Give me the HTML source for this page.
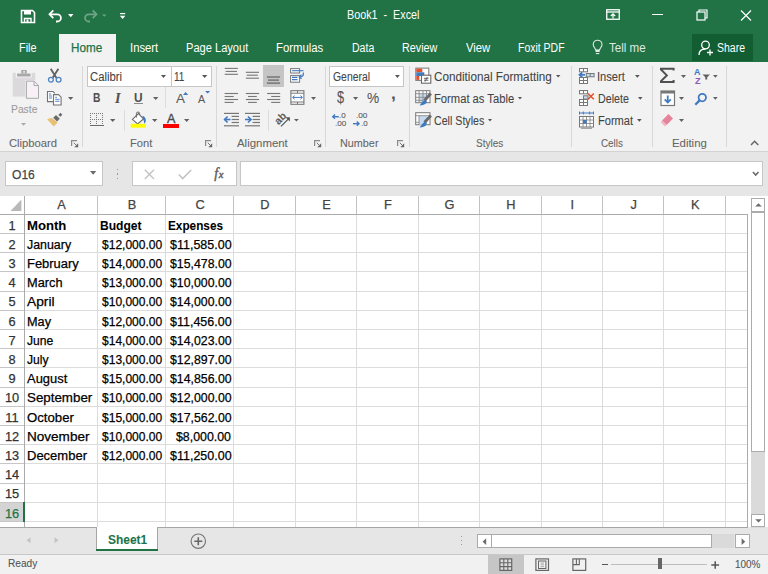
<!DOCTYPE html>
<html><head><meta charset="utf-8">
<style>
*{margin:0;padding:0;box-sizing:border-box}
html,body{width:768px;height:574px;overflow:hidden;background:#fff}
body{position:relative;font-family:"Liberation Sans",sans-serif}
.t.w{-webkit-text-stroke:0}
.rib .t{-webkit-text-stroke:0.08px currentColor}
.a{position:absolute}
.t{position:absolute;white-space:nowrap;line-height:1;transform-origin:0 0;-webkit-text-stroke:0.25px currentColor}
svg{overflow:visible}
</style></head><body>
<div class="a" style="left:0px;top:0px;width:768px;height:62px;background:#217346;"></div>
<svg class="a" style="left:20px;top:9px;" width="16" height="15" viewBox="0 0 16 15"><path d="M1.5 1.5h11l2 2v10h-13z" fill="none" stroke="#fff" stroke-width="1.6"/>
<rect x="4" y="1.5" width="7" height="4" fill="#fff"/><path d="M4.5 13.5v-4h6.5v4" fill="none" stroke="#fff" stroke-width="1.4"/>
<rect x="6.5" y="10.5" width="2" height="3" fill="#fff"/></svg>
<svg class="a" style="left:48px;top:9px;" width="16" height="14" viewBox="0 0 16 14"><path d="M2 5.3h7.3a3.6 3.6 0 0 1 0 7.2H8" fill="none" stroke="#fff" stroke-width="1.8"/>
<path d="M5.3 1.3L1.5 5.3l3.8 3.8" fill="none" stroke="#fff" stroke-width="1.8"/></svg>
<svg class="a" style="left:68px;top:14px;" width="6" height="4" viewBox="0 0 6 4"><path d="M0 0h5.5L2.75 3.2z" fill="#fff"/></svg>
<svg class="a" style="left:82px;top:9px;opacity:.35" width="16" height="14" viewBox="0 0 16 14"><path d="M14 5.3H6.7a3.6 3.6 0 0 0 0 7.2H8" fill="none" stroke="#fff" stroke-width="1.8"/>
<path d="M10.7 1.3l3.8 4l-3.8 3.8" fill="none" stroke="#fff" stroke-width="1.8"/></svg>
<svg class="a" style="left:102px;top:14px;opacity:.35" width="6" height="4" viewBox="0 0 6 4"><path d="M0 0.5h4.5L2.25 2.8z" fill="#fff"/></svg>
<svg class="a" style="left:119px;top:12px;" width="7" height="8" viewBox="0 0 7 8"><rect x="1" y="1" width="5.2" height="1.2" fill="#fff"/><path d="M0.8 3.8h5.6L3.6 7z" fill="#fff"/></svg>
<div class="t w" style="left:346.90px;top:9.42px;font-size:12.06px;color:#fff;transform:scaleX(0.8936);white-space:pre;">Book1  -  Excel</div>
<svg class="a" style="left:606px;top:9px;" width="15" height="12" viewBox="0 0 15 12"><rect x="0.75" y="0.75" width="12.5" height="9.5" fill="none" stroke="#fff" stroke-width="1.3"/>
<path d="M0.75 3h12.5" stroke="#fff" stroke-width="1.3"/><path d="M7 9.5V5M4.8 7l2.2-2.2L9.2 7" fill="none" stroke="#fff" stroke-width="1.2"/></svg>
<div class="a" style="left:652px;top:14.3px;width:11px;height:1.2px;background:#fff;"></div>
<svg class="a" style="left:696px;top:9px;" width="13" height="12" viewBox="0 0 13 12"><rect x="1" y="3" width="8" height="8" fill="none" stroke="#fff" stroke-width="1.2"/>
<path d="M3 3V1h8v8H9" fill="none" stroke="#fff" stroke-width="1.2"/></svg>
<svg class="a" style="left:740px;top:9.5px;" width="12" height="11" viewBox="0 0 12 11"><path d="M1 0.5l10 10M11 0.5l-10 10" stroke="#fff" stroke-width="1.2"/></svg>
<div class="t w" style="left:19.40px;top:42.35px;font-size:12.21px;color:#fff;transform:scaleX(0.8948);">File</div>
<div class="a" style="left:58.5px;top:33.5px;width:57.5px;height:28.5px;background:#f2f2f2;"></div>
<div class="t" style="left:71.25px;top:42.35px;font-size:12.21px;color:#217346;transform:scaleX(0.9578);">Home</div>
<div class="t w" style="left:130.20px;top:42.35px;font-size:12.21px;color:#fff;transform:scaleX(0.9235);">Insert</div>
<div class="t w" style="left:186.00px;top:42.35px;font-size:12.21px;color:#fff;transform:scaleX(0.9086);">Page Layout</div>
<div class="t w" style="left:276.00px;top:42.35px;font-size:12.21px;color:#fff;transform:scaleX(0.9295);">Formulas</div>
<div class="t w" style="left:351.70px;top:42.35px;font-size:12.21px;color:#fff;transform:scaleX(0.8644);">Data</div>
<div class="t w" style="left:402.30px;top:42.35px;font-size:12.21px;color:#fff;transform:scaleX(0.8834);">Review</div>
<div class="t w" style="left:465.70px;top:42.35px;font-size:12.21px;color:#fff;transform:scaleX(0.9249);">View</div>
<div class="t w" style="left:517.70px;top:42.35px;font-size:12.21px;color:#fff;transform:scaleX(0.8587);">Foxit PDF</div>
<svg class="a" style="left:591px;top:39px;" width="13" height="16" viewBox="0 0 13 16"><path d="M4.6 11C4.4 9.2 2.2 8 2.2 5.6A4.4 4.4 0 0 1 11 5.6C11 8 8.8 9.2 8.6 11z" fill="none" stroke="#dfe9e3" stroke-width="1.1"/>
<rect x="4.5" y="10.8" width="4.2" height="2.2" fill="#dfe9e3"/><rect x="4.9" y="14" width="3.4" height="1.1" fill="#dfe9e3"/></svg>
<div class="t w" style="left:609.25px;top:42.35px;font-size:12.21px;color:#dfe9e3;transform:scaleX(0.9488);">Tell me</div>
<div class="a" style="left:692.25px;top:33.5px;width:60.5px;height:27.5px;background:#125d32;"></div>
<svg class="a" style="left:698px;top:40px;" width="17" height="16" viewBox="0 0 17 16"><circle cx="7.5" cy="5" r="3.8" fill="none" stroke="#fff" stroke-width="1.3"/>
<path d="M1 15c0-4 2.5-6 6.5-6" fill="none" stroke="#fff" stroke-width="1.3"/><path d="M12 9.5v6M9 12.5h6" stroke="#fff" stroke-width="1.3"/></svg>
<div class="t w" style="left:717.25px;top:42.35px;font-size:12.21px;color:#fff;transform:scaleX(0.8596);">Share</div>
<div class="rib">
<div class="a" style="left:0px;top:62px;width:768px;height:89px;background:#f2f2f2;"></div>
<div class="a" style="left:0px;top:151px;width:768px;height:1px;background:#d2d2d2;"></div>
<div class="t" style="left:9.20px;top:137.93px;font-size:11.05px;color:#666;transform:scaleX(1.0174);">Clipboard</div>
<div class="t" style="left:130.10px;top:137.93px;font-size:11.05px;color:#666;transform:scaleX(1.0134);">Font</div>
<div class="t" style="left:237.20px;top:137.93px;font-size:11.05px;color:#666;transform:scaleX(1.0341);">Alignment</div>
<div class="t" style="left:339.50px;top:137.93px;font-size:11.05px;color:#666;transform:scaleX(0.9798);">Number</div>
<div class="t" style="left:476.30px;top:137.93px;font-size:11.05px;color:#666;transform:scaleX(0.9043);">Styles</div>
<div class="t" style="left:600.60px;top:137.93px;font-size:11.05px;color:#666;transform:scaleX(0.8918);">Cells</div>
<div class="t" style="left:671.50px;top:137.93px;font-size:11.05px;color:#666;transform:scaleX(1.0302);">Editing</div>
<div class="a" style="left:82px;top:66px;width:1px;height:81px;background:#d8d8d8;"></div>
<div class="a" style="left:216px;top:66px;width:1px;height:81px;background:#d8d8d8;"></div>
<div class="a" style="left:325px;top:66px;width:1px;height:81px;background:#d8d8d8;"></div>
<div class="a" style="left:408.5px;top:66px;width:1px;height:81px;background:#d8d8d8;"></div>
<div class="a" style="left:571.3px;top:66px;width:1px;height:81px;background:#d8d8d8;"></div>
<div class="a" style="left:652.3px;top:66px;width:1px;height:81px;background:#d8d8d8;"></div>
<div class="a" style="left:726px;top:66px;width:1px;height:81px;background:#d8d8d8;"></div>
<svg class="a" style="left:70.5px;top:140px;" width="8" height="8" viewBox="0 0 8 8"><path d="M0.6 6V0.6H6" fill="none" stroke="#8a8a8a" stroke-width="1.2"/><path d="M2.8 2.8L5 5" stroke="#777" stroke-width="1"/><path d="M7.2 3.3V7.2H3.3z" fill="#666"/></svg>
<svg class="a" style="left:204.5px;top:140px;" width="8" height="8" viewBox="0 0 8 8"><path d="M0.6 6V0.6H6" fill="none" stroke="#8a8a8a" stroke-width="1.2"/><path d="M2.8 2.8L5 5" stroke="#777" stroke-width="1"/><path d="M7.2 3.3V7.2H3.3z" fill="#666"/></svg>
<svg class="a" style="left:313.5px;top:140px;" width="8" height="8" viewBox="0 0 8 8"><path d="M0.6 6V0.6H6" fill="none" stroke="#8a8a8a" stroke-width="1.2"/><path d="M2.8 2.8L5 5" stroke="#777" stroke-width="1"/><path d="M7.2 3.3V7.2H3.3z" fill="#666"/></svg>
<svg class="a" style="left:396.5px;top:140px;" width="8" height="8" viewBox="0 0 8 8"><path d="M0.6 6V0.6H6" fill="none" stroke="#8a8a8a" stroke-width="1.2"/><path d="M2.8 2.8L5 5" stroke="#777" stroke-width="1"/><path d="M7.2 3.3V7.2H3.3z" fill="#666"/></svg>
<svg class="a" style="left:12px;top:69px;" width="29" height="31" viewBox="0 0 29 31"><rect x="0.7" y="3.8" width="22.6" height="23.8" fill="#dcd9dc"/>
<rect x="3.8" y="0" width="16" height="8.5" fill="#f2f2f2"/>
<rect x="5.1" y="4.4" width="13.5" height="3.1" fill="#a9a9a9" rx="0.6"/>
<rect x="9.2" y="1" width="5.6" height="3.6" fill="#a9a9a9" rx="0.5"/><rect x="11.2" y="2.2" width="1.8" height="1.4" fill="#f2f2f2"/>
<path d="M14.4 12.1h7.6l4.5 4.5v12.7h-12.1z" fill="#f7f1f7" stroke="#f2f2f2" stroke-width="2.2"/>
<path d="M14.4 12.1h7.6l4.5 4.5v12.7h-12.1z" fill="#f7f1f7" stroke="#a8a8a8" stroke-width="1"/>
<path d="M22 12.1v4.5h4.5" fill="none" stroke="#a8a8a8" stroke-width="1"/></svg>
<div class="t" style="left:11.00px;top:103.85px;font-size:11.19px;color:#9a9a9a;transform:scaleX(0.9225);">Paste</div>
<svg class="a" style="left:21px;top:123px;" width="5" height="2.8" viewBox="0 0 5 2.8"><path d="M0 0H5L2.5 2.8z" fill="#a8a8a8"/></svg>
<svg class="a" style="left:46px;top:67px;" width="17" height="17" viewBox="0 0 17 17"><path d="M4.7 1.8L10.5 11M12.4 1.8L6.6 11" stroke="#606060" stroke-width="1.8" fill="none"/>
<circle cx="4.9" cy="12.7" r="2.4" fill="none" stroke="#4f84c4" stroke-width="1.3"/>
<circle cx="12.6" cy="12.7" r="2.4" fill="none" stroke="#4f84c4" stroke-width="1.3"/></svg>
<svg class="a" style="left:46px;top:90px;" width="17" height="16" viewBox="0 0 17 16"><path d="M7 11.6H1.5V1.5H7l1.8 1.8" fill="#fff" stroke="#737373" stroke-width="1.1"/>
<path d="M3 4h2.2M3 6h3M3 8h3" stroke="#3f79c0" stroke-width="0.9"/>
<path d="M7.5 4.6h5l2.6 2.6v7.8H7.5z" fill="#fff" stroke="#737373" stroke-width="1.1"/>
<path d="M9.2 7.3h1.8M9.2 9.3h4.3M9.2 11.3h4.3" stroke="#3f79c0" stroke-width="0.9"/></svg>
<svg class="a" style="left:67.8px;top:97px;" width="5.3" height="3" viewBox="0 0 5.3 3"><path d="M0 0H5.3L2.65 3z" fill="#606060"/></svg>
<svg class="a" style="left:46px;top:112px;" width="17" height="16" viewBox="0 0 17 16"><path d="M1.1 7.3L5.5 5.8L11.6 10.4L7.8 14.4z" fill="#e9bf74"/>
<path d="M8.6 4.4L12.4 8.2" stroke="#6a6a6a" stroke-width="4"/>
<path d="M13.4 1.9L15.3 3.8" stroke="#6a6a6a" stroke-width="3"/></svg>
<div class="a" style="left:86.5px;top:65.5px;width:125px;height:21.5px;background:#fff;border:1px solid #c6c6c6"></div>
<div class="a" style="left:170.5px;top:65.5px;width:1px;height:21.5px;background:#c6c6c6;"></div>
<div class="t" style="left:89.50px;top:71.20px;font-size:12.50px;color:#444;transform:scaleX(0.9033);">Calibri</div>
<svg class="a" style="left:161px;top:75px;" width="5" height="3" viewBox="0 0 5 3"><path d="M0 0H5L2.5 3z" fill="#555"/></svg>
<div class="t" style="left:173.50px;top:71.20px;font-size:12.50px;color:#444;transform:scaleX(0.8015);">11</div>
<svg class="a" style="left:202.3px;top:75px;" width="5.3" height="3" viewBox="0 0 5.3 3"><path d="M0 0H5.3L2.65 3z" fill="#555"/></svg>
<div class="t" style="left:92.80px;top:91.26px;font-size:13.37px;color:#505050;font-weight:bold;-webkit-text-stroke:0.05px currentColor;transform:scaleX(0.7665);">B</div>
<div class="t" style="left:115px;top:91.7px;font-family:'Liberation Serif',serif;font-style:italic;font-weight:bold;font-size:13.6px;color:#505050;transform:scaleX(1.05)">I</div>
<div class="t" style="left:134.30px;top:92.13px;font-size:12.65px;color:#505050;font-weight:bold;-webkit-text-stroke:0.05px currentColor;transform:scaleX(0.9420);">U</div>
<div class="a" style="left:134.3px;top:102.7px;width:8.6px;height:1.1px;background:#8a8a8a;"></div>
<svg class="a" style="left:152.6px;top:97px;" width="5.4" height="3" viewBox="0 0 5.4 3"><path d="M0 0H5.4L2.7 3z" fill="#606060"/></svg>
<div class="a" style="left:165px;top:87px;width:1px;height:21px;background:#dcdcdc;"></div>
<div class="t" style="left:175.90px;top:92.07px;font-size:13.66px;color:#5a5a5a;transform:scaleX(0.9876);">A</div>
<svg class="a" style="left:183px;top:91.5px;" width="6" height="3" viewBox="0 0 6 3"><path d="M0 3h5.2L2.6 0z" fill="#3f79c0"/></svg>
<div class="t" style="left:197.90px;top:94.09px;font-size:10.61px;color:#5a5a5a;transform:scaleX(1.0032);">A</div>
<svg class="a" style="left:204.5px;top:91.2px;" width="6" height="3" viewBox="0 0 6 3"><path d="M0 0h5.2L2.6 2.6z" fill="#3f79c0"/></svg>
<svg class="a" style="left:90px;top:113px;" width="14" height="14" viewBox="0 0 14 14"><rect x="0" y="0" width="1" height="1" fill="#777"/><rect x="0" y="2" width="1" height="1" fill="#777"/><rect x="0" y="4" width="1" height="1" fill="#777"/><rect x="0" y="6" width="1" height="1" fill="#777"/><rect x="0" y="8" width="1" height="1" fill="#777"/><rect x="0" y="10" width="1" height="1" fill="#777"/><rect x="2" y="0" width="1" height="1" fill="#777"/><rect x="2" y="6" width="1" height="1" fill="#777"/><rect x="4" y="0" width="1" height="1" fill="#777"/><rect x="4" y="6" width="1" height="1" fill="#777"/><rect x="6" y="0" width="1" height="1" fill="#777"/><rect x="6" y="2" width="1" height="1" fill="#777"/><rect x="6" y="4" width="1" height="1" fill="#777"/><rect x="6" y="6" width="1" height="1" fill="#777"/><rect x="6" y="8" width="1" height="1" fill="#777"/><rect x="6" y="10" width="1" height="1" fill="#777"/><rect x="8" y="0" width="1" height="1" fill="#777"/><rect x="8" y="6" width="1" height="1" fill="#777"/><rect x="10" y="0" width="1" height="1" fill="#777"/><rect x="10" y="6" width="1" height="1" fill="#777"/><rect x="12" y="0" width="1" height="1" fill="#777"/><rect x="12" y="2" width="1" height="1" fill="#777"/><rect x="12" y="4" width="1" height="1" fill="#777"/><rect x="12" y="6" width="1" height="1" fill="#777"/><rect x="12" y="8" width="1" height="1" fill="#777"/><rect x="12" y="10" width="1" height="1" fill="#777"/><rect x="0" y="12" width="14" height="1" fill="#6a6a6a"/></svg>
<svg class="a" style="left:110px;top:119.2px;" width="5.4" height="3" viewBox="0 0 5.4 3"><path d="M0 0H5.4L2.7 3z" fill="#606060"/></svg>
<div class="a" style="left:123.5px;top:109.5px;width:1px;height:21px;background:#dcdcdc;"></div>
<svg class="a" style="left:130px;top:111px;" width="17" height="17" viewBox="0 0 17 17"><path d="M2.4 8.3L8.5 2.6L13.5 8L7.6 13z" fill="#fff" stroke="#6a6a6a" stroke-width="1.1"/>
<path d="M6.4 6.5V2.6a1.6 1.6 0 0 1 3.2 0V4" fill="none" stroke="#6a6a6a" stroke-width="1"/>
<path d="M12.6 4.7c2 0.5 3.6 2.8 3.2 5.3c-0.3 1.4-1 2.2-1.9 2.8c0.4-1.8 0-3.6-1.3-5.3z" fill="#3f79c0"/>
<rect x="0.7" y="12.8" width="15.3" height="3.9" fill="#ffff00"/></svg>
<svg class="a" style="left:151.6px;top:119.2px;" width="5.4" height="3" viewBox="0 0 5.4 3"><path d="M0 0H5.4L2.7 3z" fill="#606060"/></svg>
<div class="t" style="left:167.00px;top:112.27px;font-size:13.66px;color:#4a4a4a;transform:scaleX(0.9218);-webkit-text-stroke:0.35px #4a4a4a;">A</div>
<div class="a" style="left:163.1px;top:124px;width:15.7px;height:3.8px;background:#ff0000;"></div>
<svg class="a" style="left:184.1px;top:119.2px;" width="5.4" height="3" viewBox="0 0 5.4 3"><path d="M0 0H5.4L2.7 3z" fill="#606060"/></svg>
<svg class="a" style="left:220px;top:62px;" width="80" height="30" viewBox="0 0 80 30"><rect x="4.70" y="5.85" width="13.20" height="1.1" fill="#777"/><rect x="5.60" y="8.85" width="11.40" height="1.1" fill="#777"/><rect x="4.70" y="11.75" width="13.20" height="1.1" fill="#777"/><rect x="25.80" y="9.75" width="13.20" height="1.1" fill="#777"/><rect x="26.70" y="12.65" width="11.20" height="1.1" fill="#777"/><rect x="25.80" y="15.65" width="13.20" height="1.1" fill="#777"/></svg>
<div class="a" style="left:263.1px;top:65.3px;width:20.8px;height:21.6px;background:#c5c5c5;"></div>
<svg class="a" style="left:263px;top:62px;" width="22" height="30" viewBox="0 0 22 30"><rect x="3.90" y="14.35" width="13.20" height="1.3" fill="#6a6a6a"/><rect x="5.00" y="17.45" width="11.00" height="1.3" fill="#6a6a6a"/><rect x="3.90" y="20.45" width="13.20" height="1.3" fill="#6a6a6a"/></svg>
<svg class="a" style="left:289px;top:67px;" width="17" height="17" viewBox="0 0 17 17"><rect x="1.6" y="1.6" width="9" height="4.4" fill="#fff" stroke="#777" stroke-width="1"/>
<path d="M3 3.7H14.5" stroke="#3f79c0" stroke-width="1.1"/>
<rect x="1.6" y="8.6" width="9" height="6.6" fill="#fff" stroke="#777" stroke-width="1"/>
<path d="M3 10.4H8.5M3 12.6H8.5" stroke="#3f79c0" stroke-width="1.1"/>
<path d="M14.3 5.5c0.6 3-1 4.3-3.5 4.4" fill="none" stroke="#3f79c0" stroke-width="1.2"/>
<path d="M12.5 7.8L10.3 9.9L12.6 11.8" fill="none" stroke="#3f79c0" stroke-width="1.2"/></svg>
<svg class="a" style="left:220px;top:88px;" width="64" height="20" viewBox="0 0 64 20"><rect x="4.60" y="4.95" width="13.40" height="1.1" fill="#777"/><rect x="4.60" y="7.95" width="9.10" height="1.1" fill="#777"/><rect x="4.60" y="10.95" width="13.40" height="1.1" fill="#777"/><rect x="4.60" y="13.85" width="9.10" height="1.1" fill="#777"/><rect x="25.80" y="4.95" width="13.30" height="1.1" fill="#777"/><rect x="28.00" y="7.95" width="8.80" height="1.1" fill="#777"/><rect x="25.80" y="10.95" width="13.30" height="1.1" fill="#777"/><rect x="28.00" y="13.85" width="8.80" height="1.1" fill="#777"/><rect x="47.10" y="4.95" width="13.10" height="1.1" fill="#777"/><rect x="51.20" y="7.95" width="9.00" height="1.1" fill="#777"/><rect x="47.10" y="10.95" width="13.10" height="1.1" fill="#777"/><rect x="51.20" y="13.85" width="9.00" height="1.1" fill="#777"/></svg>
<svg class="a" style="left:289.5px;top:90px;" width="15" height="15" viewBox="0 0 15 15"><rect x="0.9" y="0.7" width="13" height="13.6" fill="#fff" stroke="#777" stroke-width="1.1"/>
<path d="M0.9 3.2H13.9M0.9 12H13.9M7.5 0.7V3.2M7.5 12V14.3" stroke="#777" stroke-width="1"/>
<path d="M3 7.4H12" stroke="#3f79c0" stroke-width="1"/>
<path d="M4.6 5.6L2.6 7.4L4.6 9.2M10.4 5.6L12.4 7.4L10.4 9.2" fill="none" stroke="#3f79c0" stroke-width="1"/></svg>
<svg class="a" style="left:311.1px;top:97.1px;" width="5" height="2.9" viewBox="0 0 5 2.9"><path d="M0 0H5L2.5 2.9z" fill="#606060"/></svg>
<svg class="a" style="left:224px;top:112px;" width="16" height="15" viewBox="0 0 16 15"><rect x="0" y="0.80" width="15" height="1.2" fill="#777"/><rect x="0" y="13.20" width="15" height="1.2" fill="#777"/><rect x="7.6" y="3.80" width="7.4" height="1.2" fill="#777"/><rect x="7.6" y="6.90" width="7.4" height="1.2" fill="#777"/><rect x="7.6" y="9.90" width="7.4" height="1.2" fill="#777"/><path d="M0.5 7.5H6.5" stroke="#3f79c0" stroke-width="1.6"/><path d="M3.6 4.5L0.6 7.5L3.6 10.5" fill="none" stroke="#3f79c0" stroke-width="1.6"/></svg>
<svg class="a" style="left:245px;top:112px;" width="16" height="15" viewBox="0 0 16 15"><rect x="0" y="0.80" width="15" height="1.2" fill="#777"/><rect x="0" y="13.20" width="15" height="1.2" fill="#777"/><rect x="7.6" y="3.80" width="7.4" height="1.2" fill="#777"/><rect x="7.6" y="6.90" width="7.4" height="1.2" fill="#777"/><rect x="7.6" y="9.90" width="7.4" height="1.2" fill="#777"/><path d="M0 7.5H6" stroke="#3f79c0" stroke-width="1.6"/><path d="M3 4.5L6 7.5L3 10.5" fill="none" stroke="#3f79c0" stroke-width="1.6"/></svg>
<div class="a" style="left:267.5px;top:109.5px;width:1px;height:21px;background:#dcdcdc;"></div>
<div class="t" style="left:273.5px;top:112.8px;font-size:10.5px;font-weight:bold;color:#5f5f5f;transform:rotate(-45deg);transform-origin:50% 50%">ab</div>
<svg class="a" style="left:274px;top:112px;" width="18" height="16" viewBox="0 0 18 16"><path d="M7 14.3L14.5 6.8" stroke="#555" stroke-width="1.2"/><path d="M11.5 5.2H15.9V9.6z" fill="#555"/></svg>
<svg class="a" style="left:294px;top:119px;" width="4.8" height="2.6" viewBox="0 0 4.8 2.6"><path d="M0 0H4.8L2.4 2.6z" fill="#606060"/></svg>
<div class="a" style="left:329.4px;top:65.5px;width:74.2px;height:21px;background:#fff;border:1px solid #c6c6c6"></div>
<div class="t" style="left:332.90px;top:71.20px;font-size:12.50px;color:#444;transform:scaleX(0.8342);">General</div>
<svg class="a" style="left:394.5px;top:75px;" width="4.8" height="3" viewBox="0 0 4.8 3"><path d="M0 0H4.8L2.4 3z" fill="#555"/></svg>
<div class="t" style="left:336.70px;top:90.04px;font-size:15.57px;color:#555;transform:scaleX(0.8199);">$</div>
<svg class="a" style="left:353px;top:97px;" width="5.2" height="2.9" viewBox="0 0 5.2 2.9"><path d="M0 0H5.2L2.6 2.9z" fill="#606060"/></svg>
<div class="t" style="left:367.10px;top:91.28px;font-size:14.86px;color:#555;transform:scaleX(0.9237);">%</div>
<div class="t" style="left:390.60px;top:85.95px;font-size:16.00px;color:#555;font-weight:bold;-webkit-text-stroke:0.05px currentColor;transform:scaleX(1.0791);">,</div>
<div class="t" style="left:339.40px;top:112.17px;font-size:7.56px;color:#555;transform:scaleX(1.0470);">.0</div>
<div class="t" style="left:334.70px;top:120.03px;font-size:7.85px;color:#555;transform:scaleX(1.0358);">.00</div>
<svg class="a" style="left:332px;top:114px;" width="7" height="6" viewBox="0 0 7 6"><path d="M0.6 2.7H6.8" stroke="#3f79c0" stroke-width="1.4"/><path d="M3 0.6L0.8 2.7L3 4.8" fill="none" stroke="#3f79c0" stroke-width="1.4"/></svg>
<div class="t" style="left:355.70px;top:112.17px;font-size:7.56px;color:#555;transform:scaleX(1.0851);">.00</div>
<div class="t" style="left:360.50px;top:120.03px;font-size:7.85px;color:#555;transform:scaleX(1.0083);">.0</div>
<svg class="a" style="left:353.2px;top:120.5px;" width="7" height="6" viewBox="0 0 7 6"><path d="M0 2.7H6" stroke="#3f79c0" stroke-width="1.4"/><path d="M3.8 0.6L6 2.7L3.8 4.8" fill="none" stroke="#3f79c0" stroke-width="1.4"/></svg>
<div class="t" style="left:434.40px;top:71.13px;font-size:12.65px;color:#444;transform:scaleX(0.9259);">Conditional Formatting</div>
<svg class="a" style="left:556.2px;top:75px;" width="4.4" height="2.6" viewBox="0 0 4.4 2.6"><path d="M0 0H4.4L2.2 2.6z" fill="#555"/></svg>
<div class="t" style="left:434.40px;top:93.13px;font-size:12.65px;color:#444;transform:scaleX(0.8869);">Format as Table</div>
<svg class="a" style="left:517.9px;top:97px;" width="4" height="2.5" viewBox="0 0 4 2.5"><path d="M0 0H4L2.0 2.5z" fill="#555"/></svg>
<div class="t" style="left:434.40px;top:115.13px;font-size:12.65px;color:#444;transform:scaleX(0.8420);">Cell Styles</div>
<svg class="a" style="left:488px;top:119px;" width="4" height="2.5" viewBox="0 0 4 2.5"><path d="M0 0H4L2.0 2.5z" fill="#555"/></svg>
<svg class="a" style="left:415px;top:67px;" width="17" height="17" viewBox="0 0 17 17"><rect x="0.8" y="1.1" width="13" height="12.3" fill="#fff" stroke="#777" stroke-width="1"/>
<rect x="1.3" y="1.6" width="6" height="3.7" fill="#e0502a"/>
<rect x="1.3" y="5.3" width="8" height="3.7" fill="#3f79c0"/>
<rect x="1.3" y="9" width="3" height="3.9" fill="#e0502a"/>
<rect x="6.5" y="8.2" width="9.3" height="8" fill="#fff" stroke="#6a6a6a" stroke-width="1.1"/>
<path d="M9 11.3h4.4M9 13.2h4.4M12.4 10L10 14.6" stroke="#555" stroke-width="0.9"/></svg>
<svg class="a" style="left:415px;top:89.5px;" width="17" height="17" viewBox="0 0 17 17"><rect x="0.7" y="0.7" width="14.3" height="12" fill="#fff" stroke="#777" stroke-width="1"/>
<rect x="4" y="4" width="7.5" height="8" fill="#c5daf0"/>
<path d="M0.7 3.7H15M0.7 7.3H12M0.7 10.3H8M4 0.7V12.7M8 0.7V12.7M11.5 0.7V8" stroke="#888" stroke-width="0.9"/>
<path d="M15.8 3.5L9.5 10.6" stroke="#6a6a6a" stroke-width="3"/>
<path d="M9.3 10.2c1.5-0.4 3 0.8 2.4 2.4c-0.6 1.6-3.6 2.8-7.2 2.9c1.5-1.2 2.8-4.5 4.8-5.3z" fill="#3f79c0"/></svg>
<svg class="a" style="left:415px;top:111.5px;" width="17" height="17" viewBox="0 0 17 17"><rect x="0.7" y="0.7" width="14.3" height="12" fill="#fff" stroke="#777" stroke-width="1"/>
<rect x="4" y="3.7" width="8" height="9" fill="#c5daf0"/>
<path d="M0.7 3.7H15M0.7 10.3H4M4 3.7V12.7" stroke="#888" stroke-width="0.9"/>
<path d="M15.8 3.5L9.5 10.6" stroke="#6a6a6a" stroke-width="3"/>
<path d="M9.3 10.2c1.5-0.4 3 0.8 2.4 2.4c-0.6 1.6-3.6 2.8-7.2 2.9c1.5-1.2 2.8-4.5 4.8-5.3z" fill="#3f79c0"/></svg>
<div class="t" style="left:596.80px;top:71.20px;font-size:12.50px;color:#444;transform:scaleX(0.8892);">Insert</div>
<svg class="a" style="left:634.5px;top:75px;" width="4.7" height="2.8" viewBox="0 0 4.7 2.8"><path d="M0 0H4.7L2.35 2.8z" fill="#555"/></svg>
<div class="t" style="left:597.80px;top:93.20px;font-size:12.50px;color:#444;transform:scaleX(0.8551);">Delete</div>
<svg class="a" style="left:638.3px;top:97px;" width="4.5" height="2.8" viewBox="0 0 4.5 2.8"><path d="M0 0H4.5L2.25 2.8z" fill="#555"/></svg>
<div class="t" style="left:597.80px;top:115.20px;font-size:12.50px;color:#444;transform:scaleX(0.8866);">Format</div>
<svg class="a" style="left:636.5px;top:119px;" width="4.7" height="2.8" viewBox="0 0 4.7 2.8"><path d="M0 0H4.7L2.35 2.8z" fill="#555"/></svg>
<svg class="a" style="left:578px;top:67px;" width="17" height="17" viewBox="0 0 17 17"><rect x="1.5" y="1.5" width="8" height="3.3" fill="#fff" stroke="#777" stroke-width="1"/><path d="M5.5 1.5V4.8" stroke="#777"/><rect x="1.5" y="10.5" width="8" height="6" fill="#fff" stroke="#777" stroke-width="1"/><path d="M1.5 13.5H9.5M5.5 10.5V16.5" stroke="#777"/><rect x="8.3" y="6.5" width="7.8" height="3.3" fill="#c5daf0" stroke="#777" stroke-width="1"/><path d="M12.2 6.5V9.8" stroke="#777"/><path d="M1.8 7.8H7" stroke="#3f79c0" stroke-width="1.8"/><path d="M4.3 5.3L1.5 7.8L4.3 10.3" fill="none" stroke="#3f79c0" stroke-width="1.8"/></svg>
<svg class="a" style="left:578px;top:89px;" width="17" height="17" viewBox="0 0 17 17"><rect x="1.5" y="1.5" width="8" height="3.3" fill="#fff" stroke="#777" stroke-width="1"/><path d="M5.5 1.5V4.8" stroke="#777"/><rect x="1.5" y="10.5" width="8" height="6" fill="#fff" stroke="#777" stroke-width="1"/><path d="M1.5 13.5H9.5M5.5 10.5V16.5" stroke="#777"/><rect x="5.5" y="6.8" width="4.5" height="3.3" fill="#c5daf0" stroke="#777" stroke-width="1"/><path d="M10 4.5L15.8 10.3M15.8 4.5L10 10.3" stroke="#e0502a" stroke-width="1.5"/></svg>
<svg class="a" style="left:578px;top:111px;" width="17" height="18" viewBox="0 0 17 18"><path d="M1.5 2H15.5" stroke="#3f79c0" stroke-width="1"/><path d="M1.5 0.5V3.5M15.5 0.5V3.5M5.3 0.5V3.5M11.7 0.5V3.5" stroke="#3f79c0" stroke-width="1"/><rect x="1.5" y="5.5" width="14" height="10.5" fill="#fff" stroke="#777" stroke-width="1"/><path d="M1.5 9H15.5M1.5 12.5H15.5M5 5.5V16M8.5 5.5V16M12 5.5V16" stroke="#888" stroke-width="0.9"/><rect x="5" y="9" width="3.5" height="3.5" fill="#3f79c0"/><path d="M3 17.3h11" stroke="#888" stroke-width="0.9"/></svg>
<svg class="a" style="left:658.5px;top:67px;" width="16" height="17" viewBox="0 0 16 17"><path d="M1 1.8H14.6V3.6M1.5 2L7.8 8.4L1.5 14.6M1 14.9H14.6V13.1" fill="none" stroke="#505050" stroke-width="2"/></svg>
<svg class="a" style="left:680.6px;top:75px;" width="5" height="3" viewBox="0 0 5 3"><path d="M0 0H5L2.5 3z" fill="#606060"/></svg>
<div class="t" style="left:694.30px;top:67.94px;font-size:9.01px;color:#3f79c0;font-weight:bold;-webkit-text-stroke:0.05px currentColor;transform:scaleX(0.9836);">A</div>
<div class="t" style="left:694.80px;top:76.94px;font-size:9.01px;color:#8e58b6;font-weight:bold;-webkit-text-stroke:0.05px currentColor;transform:scaleX(1.0171);">Z</div>
<svg class="a" style="left:701.5px;top:74px;" width="9" height="6" viewBox="0 0 9 6"><path d="M0.5 0.5H8L5.2 3.3V5.5H3.3V3.3z" fill="#606060"/></svg>
<svg class="a" style="left:712.6px;top:75px;" width="4.7" height="2.8" viewBox="0 0 4.7 2.8"><path d="M0 0H4.7L2.35 2.8z" fill="#606060"/></svg>
<svg class="a" style="left:659.5px;top:89.5px;" width="16" height="17" viewBox="0 0 16 17"><rect x="1" y="1" width="13.5" height="14.5" fill="#fff" stroke="#777" stroke-width="1.2"/><rect x="1" y="1" width="13.5" height="2.5" fill="#777"/><path d="M7.75 5.5V12.5" stroke="#3f79c0" stroke-width="1.8"/><path d="M4.7 9.3L7.75 12.5L10.8 9.3" fill="none" stroke="#3f79c0" stroke-width="1.8"/></svg>
<svg class="a" style="left:678.6px;top:97px;" width="5" height="3" viewBox="0 0 5 3"><path d="M0 0H5L2.5 3z" fill="#606060"/></svg>
<svg class="a" style="left:693.5px;top:91.5px;" width="14" height="14" viewBox="0 0 14 14"><circle cx="8.3" cy="5.6" r="3.7" fill="none" stroke="#3f79c0" stroke-width="1.8"/><path d="M5.6 8.4L1.3 12.7" stroke="#3f79c0" stroke-width="2.2"/></svg>
<svg class="a" style="left:712.6px;top:97px;" width="4.7" height="2.8" viewBox="0 0 4.7 2.8"><path d="M0 0H4.7L2.35 2.8z" fill="#606060"/></svg>
<svg class="a" style="left:660px;top:112.5px;" width="14" height="14" viewBox="0 0 14 14"><path d="M8.5 1L13 5.5L6.6 11.9L2.1 7.4z" fill="#e6839a"/><path d="M2.1 7.4L6.6 11.9L5 13.4L0.6 9z" fill="#f2b4c2"/></svg>
<svg class="a" style="left:678.6px;top:119.2px;" width="5" height="3" viewBox="0 0 5 3"><path d="M0 0H5L2.5 3z" fill="#606060"/></svg>
<svg class="a" style="left:749.5px;top:140px;" width="10" height="6" viewBox="0 0 10 6"><path d="M1 5L4.6 1.3L8.3 5" fill="none" stroke="#666" stroke-width="1.5"/></svg>
</div>
<div class="a" style="left:0px;top:151.5px;width:768px;height:44.5px;background:#e6e6e6;"></div>
<div class="a" style="left:5px;top:161px;width:97.5px;height:25px;background:#fff;border:1px solid #c6c6c6"></div>
<div class="t" style="left:11.70px;top:168.41px;font-size:13.08px;color:#444;transform:scaleX(0.9222);">O16</div>
<svg class="a" style="left:89.5px;top:171px;" width="6.3" height="3.7" viewBox="0 0 6.3 3.7"><path d="M0 0H6.3L3.15 3.7z" fill="#6a6a6a"/></svg>
<div class="a" style="left:116.8px;top:169px;width:1.3px;height:1.3px;background:#9a9a9a;"></div>
<div class="a" style="left:116.8px;top:173.3px;width:1.3px;height:1.3px;background:#9a9a9a;"></div>
<div class="a" style="left:116.8px;top:177.6px;width:1.3px;height:1.3px;background:#9a9a9a;"></div>
<div class="a" style="left:131.5px;top:161px;width:105.5px;height:25px;background:#fff;border:1px solid #c6c6c6"></div>
<svg class="a" style="left:144px;top:169px;" width="11" height="11" viewBox="0 0 11 11"><path d="M0.8 0.8L10 10M10 0.8L0.8 10" stroke="#c2c2c2" stroke-width="1.3"/></svg>
<svg class="a" style="left:178px;top:169px;" width="14" height="11" viewBox="0 0 14 11"><path d="M0.8 5.6L4.6 9.6L13.2 1" fill="none" stroke="#c2c2c2" stroke-width="1.5"/></svg>
<div class="t" style="left:214.3px;top:166.5px;font-family:'Liberation Serif',serif;font-style:italic;font-size:14px;color:#606060;-webkit-text-stroke:0.4px #606060">f</div>
<div class="t" style="left:218.7px;top:170.3px;font-family:'Liberation Serif',serif;font-style:italic;font-size:10.5px;color:#606060;-webkit-text-stroke:0.4px #606060">x</div>
<div class="a" style="left:240px;top:161px;width:523px;height:25px;background:#fff;border:1px solid #c6c6c6"></div>
<svg class="a" style="left:751.5px;top:170.5px;" width="8" height="6" viewBox="0 0 8 6"><path d="M0.9 1L3.7 4L6.5 1" fill="none" stroke="#6a6a6a" stroke-width="1.6"/></svg>
<div class="a" style="left:24.4px;top:214.2px;width:723.1px;height:312.8px;background:#fff;"></div>
<svg class="a" style="left:9.5px;top:199px;" width="12" height="12.5" viewBox="0 0 12 12.5"><path d="M0.5 11.9H11.4V0.6z" fill="#b9b9b9"/></svg>
<div class="a" style="left:0px;top:502.2px;width:24px;height:19.2px;background:#d4d4d4;"></div>
<div class="a" style="left:25px;top:233px;width:722px;height:1px;background:#dcdcdc;"></div>
<div class="a" style="left:0px;top:233px;width:24px;height:1px;background:#c6c6c6;"></div>
<div class="a" style="left:25px;top:252px;width:722px;height:1px;background:#dcdcdc;"></div>
<div class="a" style="left:0px;top:252px;width:24px;height:1px;background:#c6c6c6;"></div>
<div class="a" style="left:25px;top:271px;width:722px;height:1px;background:#dcdcdc;"></div>
<div class="a" style="left:0px;top:271px;width:24px;height:1px;background:#c6c6c6;"></div>
<div class="a" style="left:25px;top:291px;width:722px;height:1px;background:#dcdcdc;"></div>
<div class="a" style="left:0px;top:291px;width:24px;height:1px;background:#c6c6c6;"></div>
<div class="a" style="left:25px;top:310px;width:722px;height:1px;background:#dcdcdc;"></div>
<div class="a" style="left:0px;top:310px;width:24px;height:1px;background:#c6c6c6;"></div>
<div class="a" style="left:25px;top:329px;width:722px;height:1px;background:#dcdcdc;"></div>
<div class="a" style="left:0px;top:329px;width:24px;height:1px;background:#c6c6c6;"></div>
<div class="a" style="left:25px;top:348px;width:722px;height:1px;background:#dcdcdc;"></div>
<div class="a" style="left:0px;top:348px;width:24px;height:1px;background:#c6c6c6;"></div>
<div class="a" style="left:25px;top:367px;width:722px;height:1px;background:#dcdcdc;"></div>
<div class="a" style="left:0px;top:367px;width:24px;height:1px;background:#c6c6c6;"></div>
<div class="a" style="left:25px;top:387px;width:722px;height:1px;background:#dcdcdc;"></div>
<div class="a" style="left:0px;top:387px;width:24px;height:1px;background:#c6c6c6;"></div>
<div class="a" style="left:25px;top:406px;width:722px;height:1px;background:#dcdcdc;"></div>
<div class="a" style="left:0px;top:406px;width:24px;height:1px;background:#c6c6c6;"></div>
<div class="a" style="left:25px;top:425px;width:722px;height:1px;background:#dcdcdc;"></div>
<div class="a" style="left:0px;top:425px;width:24px;height:1px;background:#c6c6c6;"></div>
<div class="a" style="left:25px;top:444px;width:722px;height:1px;background:#dcdcdc;"></div>
<div class="a" style="left:0px;top:444px;width:24px;height:1px;background:#c6c6c6;"></div>
<div class="a" style="left:25px;top:463px;width:722px;height:1px;background:#dcdcdc;"></div>
<div class="a" style="left:0px;top:463px;width:24px;height:1px;background:#c6c6c6;"></div>
<div class="a" style="left:25px;top:483px;width:722px;height:1px;background:#dcdcdc;"></div>
<div class="a" style="left:0px;top:483px;width:24px;height:1px;background:#c6c6c6;"></div>
<div class="a" style="left:25px;top:502px;width:722px;height:1px;background:#dcdcdc;"></div>
<div class="a" style="left:0px;top:502px;width:24px;height:1px;background:#c6c6c6;"></div>
<div class="a" style="left:25px;top:521px;width:722px;height:1px;background:#dcdcdc;"></div>
<div class="a" style="left:0px;top:521px;width:24px;height:1px;background:#c6c6c6;"></div>
<div class="a" style="left:97px;top:215px;width:1px;height:312px;background:#dcdcdc;"></div>
<div class="a" style="left:97px;top:196px;width:1px;height:18px;background:#c2c2c2;"></div>
<div class="a" style="left:165px;top:215px;width:1px;height:312px;background:#dcdcdc;"></div>
<div class="a" style="left:165px;top:196px;width:1px;height:18px;background:#c2c2c2;"></div>
<div class="a" style="left:233px;top:215px;width:1px;height:312px;background:#dcdcdc;"></div>
<div class="a" style="left:233px;top:196px;width:1px;height:18px;background:#c2c2c2;"></div>
<div class="a" style="left:295px;top:215px;width:1px;height:312px;background:#dcdcdc;"></div>
<div class="a" style="left:295px;top:196px;width:1px;height:18px;background:#c2c2c2;"></div>
<div class="a" style="left:356px;top:215px;width:1px;height:312px;background:#dcdcdc;"></div>
<div class="a" style="left:356px;top:196px;width:1px;height:18px;background:#c2c2c2;"></div>
<div class="a" style="left:418px;top:215px;width:1px;height:312px;background:#dcdcdc;"></div>
<div class="a" style="left:418px;top:196px;width:1px;height:18px;background:#c2c2c2;"></div>
<div class="a" style="left:479px;top:215px;width:1px;height:312px;background:#dcdcdc;"></div>
<div class="a" style="left:479px;top:196px;width:1px;height:18px;background:#c2c2c2;"></div>
<div class="a" style="left:541px;top:215px;width:1px;height:312px;background:#dcdcdc;"></div>
<div class="a" style="left:541px;top:196px;width:1px;height:18px;background:#c2c2c2;"></div>
<div class="a" style="left:602px;top:215px;width:1px;height:312px;background:#dcdcdc;"></div>
<div class="a" style="left:602px;top:196px;width:1px;height:18px;background:#c2c2c2;"></div>
<div class="a" style="left:663px;top:215px;width:1px;height:312px;background:#dcdcdc;"></div>
<div class="a" style="left:663px;top:196px;width:1px;height:18px;background:#c2c2c2;"></div>
<div class="a" style="left:725px;top:215px;width:1px;height:312px;background:#dcdcdc;"></div>
<div class="a" style="left:725px;top:196px;width:1px;height:18px;background:#c2c2c2;"></div>
<div class="a" style="left:24px;top:196px;width:1px;height:331px;background:#ababab;"></div>
<div class="a" style="left:0px;top:214px;width:748px;height:1px;background:#ababab;"></div>
<div class="a" style="left:747px;top:214px;width:1px;height:313px;background:#ababab;"></div>
<div class="a" style="left:0px;top:527px;width:748px;height:1px;background:#ababab;"></div>
<div class="a" style="left:23px;top:502px;width:2px;height:20px;background:#217346;"></div>
<div class="t" style="left:57.13px;top:198.55px;font-size:12.79px;color:#444;">A</div>
<div class="t" style="left:127.68px;top:198.55px;font-size:12.79px;color:#444;">B</div>
<div class="t" style="left:195.38px;top:198.55px;font-size:12.79px;color:#444;">C</div>
<div class="t" style="left:260.30px;top:198.55px;font-size:12.79px;color:#444;">D</div>
<div class="t" style="left:322.29px;top:198.55px;font-size:12.79px;color:#444;">E</div>
<div class="t" style="left:384.09px;top:198.55px;font-size:12.79px;color:#444;">F</div>
<div class="t" style="left:444.46px;top:198.55px;font-size:12.79px;color:#444;">G</div>
<div class="t" style="left:506.26px;top:198.55px;font-size:12.79px;color:#444;">H</div>
<div class="t" style="left:570.54px;top:198.55px;font-size:12.79px;color:#444;">I</div>
<div class="t" style="left:630.56px;top:198.55px;font-size:12.79px;color:#444;">J</div>
<div class="t" style="left:690.93px;top:198.55px;font-size:12.79px;color:#444;">K</div>
<div class="t" style="left:8.44px;top:219.55px;font-size:12.79px;color:#333;">1</div>
<div class="t" style="left:8.44px;top:238.55px;font-size:12.79px;color:#333;">2</div>
<div class="t" style="left:8.44px;top:257.55px;font-size:12.79px;color:#333;">3</div>
<div class="t" style="left:8.44px;top:276.55px;font-size:12.79px;color:#333;">4</div>
<div class="t" style="left:8.44px;top:295.55px;font-size:12.79px;color:#333;">5</div>
<div class="t" style="left:8.44px;top:315.55px;font-size:12.79px;color:#333;">6</div>
<div class="t" style="left:8.44px;top:334.55px;font-size:12.79px;color:#333;">7</div>
<div class="t" style="left:8.44px;top:353.55px;font-size:12.79px;color:#333;">8</div>
<div class="t" style="left:8.44px;top:372.55px;font-size:12.79px;color:#333;">9</div>
<div class="t" style="left:4.89px;top:391.55px;font-size:12.79px;color:#333;">10</div>
<div class="t" style="left:5.36px;top:411.55px;font-size:12.79px;color:#333;">11</div>
<div class="t" style="left:4.89px;top:430.55px;font-size:12.79px;color:#333;">12</div>
<div class="t" style="left:4.89px;top:449.55px;font-size:12.79px;color:#333;">13</div>
<div class="t" style="left:4.89px;top:468.55px;font-size:12.79px;color:#333;">14</div>
<div class="t" style="left:4.89px;top:487.55px;font-size:12.79px;color:#333;">15</div>
<div class="t" style="left:4.89px;top:507.55px;font-size:12.79px;color:#217346;">16</div>
<div class="t" style="left:26.80px;top:219.41px;font-size:13.08px;color:#000;font-weight:bold;-webkit-text-stroke:0.05px currentColor;transform:scaleX(1.0043);">Month</div>
<div class="t" style="left:100.20px;top:219.41px;font-size:13.08px;color:#000;font-weight:bold;-webkit-text-stroke:0.05px currentColor;transform:scaleX(0.9234);">Budget</div>
<div class="t" style="left:168.40px;top:219.41px;font-size:13.08px;color:#000;font-weight:bold;-webkit-text-stroke:0.05px currentColor;transform:scaleX(0.9005);">Expenses</div>
<div class="t" style="left:27.30px;top:238.41px;font-size:13.08px;color:#000;transform:scaleX(0.9475);">January</div>
<div class="t" style="left:102.20px;top:238.41px;font-size:13.08px;color:#000;transform:scaleX(0.9195);">$12,000.00</div>
<div class="t" style="left:169.60px;top:238.41px;font-size:13.08px;color:#000;transform:scaleX(0.9550);">$11,585.00</div>
<div class="t" style="left:27.30px;top:257.41px;font-size:13.08px;color:#000;transform:scaleX(0.9895);">February</div>
<div class="t" style="left:102.20px;top:257.41px;font-size:13.08px;color:#000;transform:scaleX(0.9195);">$14,000.00</div>
<div class="t" style="left:169.60px;top:257.41px;font-size:13.08px;color:#000;transform:scaleX(0.9409);">$15,478.00</div>
<div class="t" style="left:27.30px;top:276.41px;font-size:13.08px;color:#000;transform:scaleX(0.9769);">March</div>
<div class="t" style="left:102.20px;top:276.41px;font-size:13.08px;color:#000;transform:scaleX(0.9195);">$13,000.00</div>
<div class="t" style="left:169.60px;top:276.41px;font-size:13.08px;color:#000;transform:scaleX(0.9409);">$10,000.00</div>
<div class="t" style="left:27.30px;top:295.41px;font-size:13.08px;color:#000;transform:scaleX(1.0506);">April</div>
<div class="t" style="left:102.20px;top:295.41px;font-size:13.08px;color:#000;transform:scaleX(0.9195);">$10,000.00</div>
<div class="t" style="left:169.60px;top:295.41px;font-size:13.08px;color:#000;transform:scaleX(0.9409);">$14,000.00</div>
<div class="t" style="left:27.30px;top:315.41px;font-size:13.08px;color:#000;transform:scaleX(0.9712);">May</div>
<div class="t" style="left:102.20px;top:315.41px;font-size:13.08px;color:#000;transform:scaleX(0.9195);">$12,000.00</div>
<div class="t" style="left:169.60px;top:315.41px;font-size:13.08px;color:#000;transform:scaleX(0.9550);">$11,456.00</div>
<div class="t" style="left:27.30px;top:334.41px;font-size:13.08px;color:#000;transform:scaleX(0.9256);">June</div>
<div class="t" style="left:102.20px;top:334.41px;font-size:13.08px;color:#000;transform:scaleX(0.9195);">$14,000.00</div>
<div class="t" style="left:169.60px;top:334.41px;font-size:13.08px;color:#000;transform:scaleX(0.9409);">$14,023.00</div>
<div class="t" style="left:27.30px;top:353.41px;font-size:13.08px;color:#000;transform:scaleX(0.9244);">July</div>
<div class="t" style="left:102.20px;top:353.41px;font-size:13.08px;color:#000;transform:scaleX(0.9195);">$13,000.00</div>
<div class="t" style="left:169.60px;top:353.41px;font-size:13.08px;color:#000;transform:scaleX(0.9409);">$12,897.00</div>
<div class="t" style="left:27.30px;top:372.41px;font-size:13.08px;color:#000;transform:scaleX(0.9896);">August</div>
<div class="t" style="left:102.20px;top:372.41px;font-size:13.08px;color:#000;transform:scaleX(0.9195);">$15,000.00</div>
<div class="t" style="left:169.60px;top:372.41px;font-size:13.08px;color:#000;transform:scaleX(0.9409);">$14,856.00</div>
<div class="t" style="left:27.30px;top:391.41px;font-size:13.08px;color:#000;transform:scaleX(1.0204);">September</div>
<div class="t" style="left:102.20px;top:391.41px;font-size:13.08px;color:#000;transform:scaleX(0.9195);">$10,000.00</div>
<div class="t" style="left:169.60px;top:391.41px;font-size:13.08px;color:#000;transform:scaleX(0.9409);">$12,000.00</div>
<div class="t" style="left:27.30px;top:411.41px;font-size:13.08px;color:#000;transform:scaleX(1.0079);">October</div>
<div class="t" style="left:102.20px;top:411.41px;font-size:13.08px;color:#000;transform:scaleX(0.9195);">$15,000.00</div>
<div class="t" style="left:169.60px;top:411.41px;font-size:13.08px;color:#000;transform:scaleX(0.9409);">$17,562.00</div>
<div class="t" style="left:27.30px;top:430.41px;font-size:13.08px;color:#000;transform:scaleX(1.0357);">November</div>
<div class="t" style="left:102.20px;top:430.41px;font-size:13.08px;color:#000;transform:scaleX(0.9195);">$10,000.00</div>
<div class="t" style="left:176.20px;top:430.41px;font-size:13.08px;color:#000;transform:scaleX(0.9450);">$8,000.00</div>
<div class="t" style="left:27.30px;top:449.41px;font-size:13.08px;color:#000;transform:scaleX(0.9943);">December</div>
<div class="t" style="left:102.20px;top:449.41px;font-size:13.08px;color:#000;transform:scaleX(0.9195);">$12,000.00</div>
<div class="t" style="left:169.60px;top:449.41px;font-size:13.08px;color:#000;transform:scaleX(0.9550);">$11,250.00</div>
<div class="a" style="left:0px;top:527px;width:768px;height:26.5px;background:#e6e6e6;"></div>
<div class="a" style="left:0px;top:554px;width:768px;height:1px;background:#c8c8c8;"></div>
<div class="a" style="left:0px;top:555px;width:768px;height:19px;background:#f1f1f1;"></div>
<svg class="a" style="left:25.5px;top:536.5px;" width="5" height="7" viewBox="0 0 5 7"><path d="M4.5 0.3V6.3L0.5 3.3z" fill="#c3c3c3"/></svg>
<svg class="a" style="left:53.5px;top:536.5px;" width="5" height="7" viewBox="0 0 5 7"><path d="M0.5 0.3V6.3L4.5 3.3z" fill="#c3c3c3"/></svg>
<div class="a" style="left:96.3px;top:527px;width:62px;height:23.8px;background:#fff;border-left:1px solid #a6a6a6;border-right:1px solid #a6a6a6"></div>
<div class="a" style="left:96.3px;top:549px;width:62px;height:1.9px;background:#217346;"></div>
<div class="t" style="left:107.50px;top:533.41px;font-size:13.08px;color:#217346;font-weight:bold;-webkit-text-stroke:0.05px currentColor;transform:scaleX(0.9139);">Sheet1</div>
<div class="a" style="left:0px;top:527px;width:96.3px;height:1px;background:#a6a6a6;"></div>
<div class="a" style="left:158.3px;top:527px;width:590px;height:1px;background:#a6a6a6;"></div>
<svg class="a" style="left:189.5px;top:532.5px;" width="17" height="17" viewBox="0 0 17 17"><circle cx="8.3" cy="8.2" r="7.2" fill="none" stroke="#777" stroke-width="1.2"/><path d="M8.3 4.2V12.2M4.3 8.2H12.3" stroke="#666" stroke-width="1.6"/></svg>
<div class="a" style="left:461px;top:536px;width:1.3px;height:1.3px;background:#9a9a9a;"></div>
<div class="a" style="left:461px;top:540px;width:1.3px;height:1.3px;background:#9a9a9a;"></div>
<div class="a" style="left:461px;top:544px;width:1.3px;height:1.3px;background:#9a9a9a;"></div>
<div class="a" style="left:477.2px;top:534.3px;width:14.5px;height:13.5px;background:#fff;border:1px solid #ababab"></div>
<svg class="a" style="left:481.5px;top:537.5px;" width="5" height="8" viewBox="0 0 5 8"><path d="M4.2 0.3V7L0.6 3.65z" fill="#6a6a6a"/></svg>
<div class="a" style="left:491px;top:534.3px;width:220.5px;height:13.5px;background:#fff;border:1px solid #ababab"></div>
<div class="a" style="left:711.5px;top:534.3px;width:22px;height:13.5px;background:#dadada;"></div>
<div class="a" style="left:735.3px;top:534.3px;width:14.5px;height:13.5px;background:#fff;border:1px solid #ababab"></div>
<svg class="a" style="left:740.8px;top:537.5px;" width="5" height="8" viewBox="0 0 5 8"><path d="M0.6 0.3V7L4.2 3.65z" fill="#6a6a6a"/></svg>
<div class="t" style="left:8.00px;top:557.85px;font-size:11.19px;color:#555;transform:scaleX(0.9056);-webkit-text-stroke:0.1px #555;">Ready</div>
<div class="a" style="left:488.2px;top:555px;width:35.5px;height:19px;background:#c6c6c6;"></div>
<svg class="a" style="left:498.5px;top:557.5px;" width="14" height="13" viewBox="0 0 14 13"><rect x="0.9" y="0.9" width="11.8" height="11.5" fill="#ddd" stroke="#666" stroke-width="1.2"/><path d="M4.8 0.9V12.4M8.8 0.9V12.4M0.9 4.7H12.7M0.9 8.6H12.7" stroke="#666" stroke-width="1.1"/></svg>
<svg class="a" style="left:535px;top:557.5px;" width="15" height="13" viewBox="0 0 15 13"><rect x="0.9" y="0.9" width="12.6" height="11.5" fill="none" stroke="#666" stroke-width="1.2"/><rect x="3.5" y="3" width="7.4" height="7.5" fill="none" stroke="#666" stroke-width="1"/><path d="M5.5 5H9M5.5 6.8H9M5.5 8.6H9" stroke="#999" stroke-width="0.8"/></svg>
<svg class="a" style="left:571.5px;top:557.5px;" width="15" height="13" viewBox="0 0 15 13"><rect x="0.9" y="0.9" width="12.8" height="11.5" fill="none" stroke="#666" stroke-width="1.2"/><path d="M0.9 6.6H7.3V0.9M4.4 0.9V6.6" fill="none" stroke="#666" stroke-width="1.1"/></svg>
<div class="a" style="left:601.8px;top:563.7px;width:5.8px;height:1.5px;background:#555;"></div>
<div class="a" style="left:611.2px;top:563.7px;width:96.3px;height:1px;background:#bdbdbd;"></div>
<div class="a" style="left:657.5px;top:558.3px;width:4.2px;height:10.4px;background:#666;"></div>
<svg class="a" style="left:711px;top:560.5px;" width="9" height="8" viewBox="0 0 9 8"><path d="M4.2 0.3V7.7M0.3 4H8.1" stroke="#555" stroke-width="1.5"/></svg>
<div class="t" style="left:734.50px;top:558.78px;font-size:11.34px;color:#555;transform:scaleX(0.8793);-webkit-text-stroke:0.1px #555;">100%</div>
<div class="a" style="left:750.8px;top:197.5px;width:14px;height:330px;background:#dadada;"></div>
<div class="a" style="left:751.2px;top:198.3px;width:13.4px;height:14px;background:#fff;border:1px solid #ababab"></div>
<svg class="a" style="left:754.5px;top:203px;" width="7" height="4" viewBox="0 0 7 4"><path d="M0.2 3.6H6.8L3.5 0.2z" fill="#6a6a6a"/></svg>
<div class="a" style="left:751.2px;top:212px;width:13.4px;height:240px;background:#fff;border:1px solid #ababab"></div>
<div class="a" style="left:751.2px;top:513.8px;width:13.4px;height:13.7px;background:#fff;border:1px solid #ababab"></div>
<svg class="a" style="left:754.5px;top:519px;" width="7" height="4" viewBox="0 0 7 4"><path d="M0.2 0.2H6.8L3.5 3.6z" fill="#6a6a6a"/></svg>
</body></html>
